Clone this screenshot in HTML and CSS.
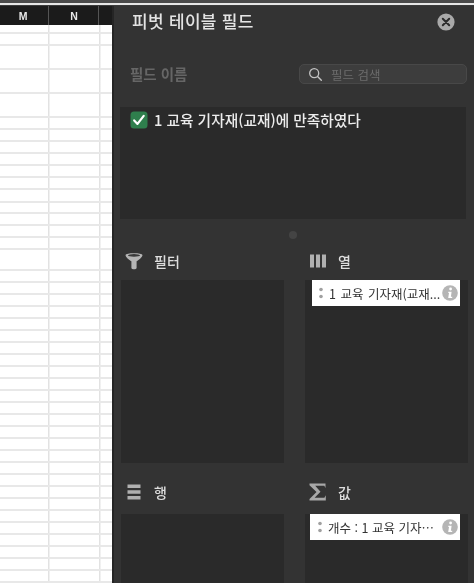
FILE: index.html
```html
<!DOCTYPE html>
<html lang="ko">
<head>
<meta charset="utf-8">
<title>피벗 테이블 필드</title>
<link rel="stylesheet" href="styles.css">
</head>
<body>
<div class="topbar"></div>
<main class="main">
  <section class="sheet">
    <div class="col-heads"><span class="ch ch-m">M</span><span class="ch ch-n">N</span><span class="ch ch-o"></span></div>
    <div class="rows">
      <div class="r r8"></div><div class="r"></div><div class="r r24"></div><div class="r r24"></div><div class="r r24"></div>
      <div class="r"></div><div class="r"></div><div class="r"></div><div class="r"></div><div class="r"></div><div class="r"></div>
      <div class="r r13"></div><div class="r r11"></div><div class="r"></div><div class="r"></div><div class="r"></div>
      <div class="r r21"></div><div class="r"></div><div class="r"></div><div class="r"></div><div class="r"></div><div class="r"></div>
      <div class="r"></div><div class="r"></div><div class="r"></div><div class="r"></div><div class="r"></div><div class="r"></div>
      <div class="r"></div><div class="r"></div><div class="r"></div><div class="r"></div><div class="r"></div><div class="r"></div>
      <div class="r"></div><div class="r"></div><div class="r"></div><div class="r"></div><div class="r"></div><div class="r"></div>
      <div class="r"></div><div class="r"></div><div class="r"></div><div class="r"></div>
    </div>
  </section>
  <aside class="panel">
    <header class="panel-head">
      <h1 class="title">피벗 테이블 필드</h1>
      <svg class="close" viewBox="0 0 18 18"><circle cx="9" cy="9" r="8.6" fill="#a9a9a9"/><path d="M5.8 5.8l6.4 6.4M12.2 5.8l-6.4 6.4" stroke="#2b2b2b" stroke-width="2" stroke-linecap="round"/></svg>
    </header>
    <div class="search-row">
      <span class="field-name">필드 이름</span>
      <label class="search">
        <svg class="search-icon" viewBox="0 0 16 16"><circle cx="6.6" cy="6.6" r="4.8" fill="none" stroke="#c4c4c4" stroke-width="1.4"/><path d="M10.2 10.2l4 4" stroke="#c4c4c4" stroke-width="1.5" stroke-linecap="round"/></svg>
        <span class="placeholder">필드 검색</span>
      </label>
    </div>
    <div class="field-list">
      <div class="field-item">
        <svg class="check" viewBox="0 0 18 18"><rect x="0.5" y="0.5" width="17" height="17" rx="3.5" fill="#2f7f4d"/><path d="M4.2 9.4l3.3 3.5 6.2-8" fill="none" stroke="#fff" stroke-width="2.2" stroke-linecap="round" stroke-linejoin="round"/></svg>
        <span>1 교육 기자재(교재)에 만족하였다</span>
      </div>
    </div>
    <div class="splitter"><span class="dot"></span></div>
    <div class="areas">
      <section class="area">
        <h2 class="area-head">
          <svg class="area-icon" viewBox="0 0 18 18"><path d="M0.5 3C0.5 0.600 17.500 0.600 17.500 3c0 2.200-3.600 5-5.900 6.200v6.800c0 1.700-5.200 1.700-5.200 0V9.200C4.100 8 0.500 5.200 0.500 3z" fill="#b4b4b4"/><ellipse cx="9" cy="3.400" rx="6" ry="1.300" fill="#3a3a3a"/></svg>
          <span>필터</span>
        </h2>
        <div class="drop tall"></div>
      </section>
      <section class="area">
        <h2 class="area-head">
          <svg class="area-icon" viewBox="0 0 18 18"><path d="M1 2.500h4v13H1zM7 2.500h4v13H7zM13 2.500h4v13h-4z" fill="#b0b0b0"/></svg>
          <span>열</span>
        </h2>
        <div class="drop tall">
          <div class="chip narrow">
            <svg class="grip" viewBox="0 0 4 12"><circle cx="2" cy="2.500" r="1.800"/><circle cx="2" cy="9.500" r="1.800"/></svg>
            <span class="chip-text">1 교육 기자재(교재...</span>
            <svg class="info" viewBox="0 0 16 16"><circle cx="8" cy="8" r="7.800" fill="#b5b5b5"/><circle cx="8.600" cy="4" r="1.400" fill="#fff"/><path d="M6.300 6.800h3.300L8.900 11.800H10.200V13H6.200l.8-5H6.300z" fill="#fff"/></svg>
          </div>
        </div>
      </section>
      <section class="area">
        <h2 class="area-head lower">
          <svg class="area-icon" viewBox="0 0 18 18"><path d="M2.500 1.500h13v3.500h-13zM2.500 7.300h13v3.500h-13zM2.500 13h13v3.500h-13z" fill="#b0b0b0"/></svg>
          <span>행</span>
        </h2>
        <div class="drop"></div>
      </section>
      <section class="area">
        <h2 class="area-head lower">
          <svg class="area-icon" viewBox="0 0 18 18"><path d="M0.500 0.500h16v4.500l-1.200-2.200H6.200L11.500 8.700 5.600 14.800h9.800l1.400-2.600V17.500H0.500v-1.600L7.500 8.900 0.500 2.200z" fill="#a8a8a8"/></svg>
          <span>값</span>
        </h2>
        <div class="drop">
          <div class="chip">
            <svg class="grip" viewBox="0 0 4 12"><circle cx="2" cy="2.500" r="1.800"/><circle cx="2" cy="9.500" r="1.800"/></svg>
            <span class="chip-text">개수 : 1 교육 기자⋯</span>
            <svg class="info" viewBox="0 0 16 16"><circle cx="8" cy="8" r="7.800" fill="#b5b5b5"/><circle cx="8.600" cy="4" r="1.400" fill="#fff"/><path d="M6.300 6.800h3.300L8.900 11.800H10.200V13H6.200l.8-5H6.300z" fill="#fff"/></svg>
          </div>
        </div>
      </section>
    </div>
  </aside>
</main>
</body>
</html>
```
FILE: styles.css
```css
* { box-sizing: border-box; }
html, body { margin: 0; padding: 0; height: 100%; overflow: hidden; }
body {
  width: 474px;
  height: 583px;
  background: #fff;
  font-family: "Noto Sans CJK KR", "Noto Sans", sans-serif;
  display: flex;
  flex-direction: column;
}
.topbar {
  height: 6px;
  flex: none;
  background: linear-gradient(#4a4a4a 0 3px, #e6e6e6 3px 5px, #3a3a3a 5px);
  filter: blur(0.35px);
}
.main { flex: 1; display: flex; min-height: 0; filter: blur(0.35px); }

/* spreadsheet */
.sheet { width: 112px; flex: none; overflow: hidden; background: #fff; }
.col-heads { display: flex; height: 19px; background: #1b1b1b; }
.ch {
  height: 100%;
  color: #e8e8e8;
  font: bold 10.500px "Liberation Sans", sans-serif;
  display: flex;
  align-items: center;
  justify-content: center;
  border-right: 1px solid #555;
}
.ch-m { width: 49px; padding-right: 2px; }
.ch-n { width: 50px; padding-left: 1px; }
.ch-o { flex: 1; border: 0; }
.rows {
  background:
    linear-gradient(#e2e2e2, #e2e2e2) 48px 0 / 1.500px 100% no-repeat,
    linear-gradient(#e2e2e2, #e2e2e2) 98.500px 0 / 1.500px 100% no-repeat;
}
.r { height: 12px; border-bottom: 2px solid #e8e8e8; }
.r8 { height: 9px; }
.r24 { height: 24px; }
.r13 { height: 13px; }
.r11 { height: 11px; }
.r21 { height: 21px; }

/* panel */
.panel {
  flex: 1;
  min-width: 0;
  background: #333;
  border-left: 2px solid #252525;
  padding-left: 7px;
  color: #e8e8e8;
  overflow: hidden;
}
.panel-head {
  height: 32px;
  display: flex;
  align-items: center;
  justify-content: space-between;
  padding: 0 19px 0 11px;
}
.title { margin: 0 0 4px; font-size: 17px; font-weight: 500; color: #e4e4e4; letter-spacing: 0.300px; white-space: nowrap; }
.close { width: 18px; height: 18px; }
.search-row {
  margin-top: 26px;
  height: 20px;
  display: flex;
  align-items: center;
  justify-content: space-between;
  padding: 0 7px 0 9px;
}
.field-name { font-size: 14.500px; font-weight: 700; color: #666; margin-top: -2px; }
.search {
  width: 168px;
  height: 20px;
  background: #3d3d3d;
  border: 1px solid #484848;
  border-radius: 5px;
  display: flex;
  align-items: center;
  padding-left: 8px;
  gap: 8px;
}
.search-icon { width: 15px; height: 15px; }
.placeholder { font-size: 12.500px; color: #6c6c6c; }
.field-list {
  margin: 23px 8px 0 -1px;
  height: 112px;
  background: #2a2a2a;
  padding: 4px 10px;
}
.field-item { display: flex; align-items: center; gap: 6px; font-size: 14.700px; font-weight: 500; color: #ececec; height: 18px; white-space: nowrap; }
.field-item span { margin-top: -2px; }
.check { width: 18px; height: 18px; flex: none; }
.splitter { height: 24px; padding: 12px 0 0 168px; }
.dot { display: block; width: 8px; height: 8px; border-radius: 50%; background: #444; }
.areas { display: grid; grid-template-columns: 163px 163px; column-gap: 21px; }
.area { min-width: 0; }
.area-head {
  margin: 0;
  height: 37px;
  padding: 9px 0 0 4px;
  display: flex;
  align-items: flex-start;
  gap: 11px;
  font-size: 14px;
  font-weight: 500;
  color: #dedede;
  line-height: 18px;
}
.area-head.lower { height: 51px; padding-top: 20px; }
.area-icon { width: 18px; height: 18px; flex: none; }
.drop { background: #2a2a2a; height: 69px; padding-left: 5px; }
.drop.tall { height: 183px; padding-left: 7px; }
.chip {
  width: 150px;
  height: 26px;
  background: #fff;
  color: #333;
  display: flex;
  align-items: center;
  padding: 0 2px 0 8px;
  font-size: 12.500px;
  gap: 6px;
  white-space: nowrap;
}
.narrow { width: 148px; padding-left: 7px; word-spacing: 1px; }
.chip-text { flex: 1; min-width: 0; }
.grip { width: 4px; height: 12px; flex: none; fill: #a0a0a0; }
.info { width: 16px; height: 16px; flex: none; }
```
